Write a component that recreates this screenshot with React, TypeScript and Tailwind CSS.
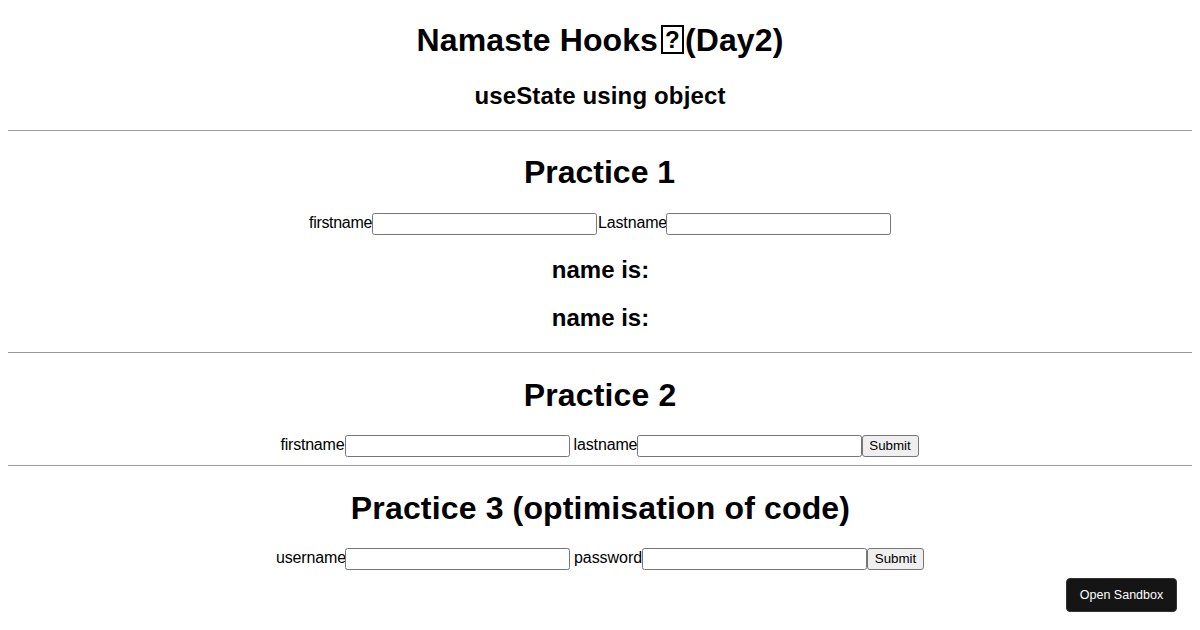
import React from "react";

function Field({ label, labelClass }: { label: string; labelClass: string }) {
  return (
    <>
      <label className={labelClass}>{label}</label>
      <input className="box-border inline-block w-[225px] h-[22px] border border-[#767676] rounded-[2.5px] bg-white align-baseline" />
    </>
  );
}

function Submit() {
  return (
    <button className="box-border inline-block w-[57px] h-[22px] border border-[#767676] rounded-[3px] bg-[#efefef] text-[13.33px] leading-none text-black align-[1px]">
      Submit
    </button>
  );
}

export default function App() {
  return (
    <div className="relative h-[630px] overflow-hidden bg-white px-2 text-center text-black font-['Liberation_Sans',Arial,sans-serif] text-[16px] leading-[18px]">
      <h1 className="pt-[22px] text-[32px] leading-[37px] font-bold tracking-[0.1px]">
        Namaste Hooks
        <span className="relative inline-block w-[27px] h-0">
          <span className="absolute left-[3px] top-[-26px] flex box-border w-[23px] h-[29px] items-center justify-center border-2 border-black text-[24px] leading-none">
            ?
          </span>
        </span>
        (Day2)
      </h1>
      <h2 className="mt-[23px] mb-[21px] text-[24px] leading-[27px] font-bold tracking-[0.15px]">useState using object</h2>
      <hr className="border-t border-[#9a9a9a]" />
      <h1 className="mt-[23px] pr-[1px] text-[32px] leading-[37px] font-bold">Practice 1</h1>
      <div className="mt-[22px] h-[22px]">
        <Field label="firstname" labelClass="inline-block w-[63px] align-[1px] text-left whitespace-nowrap tracking-[-0.31px]" />
        <Field label="Lastname" labelClass="inline-block w-[69px] pl-[1px] align-[1px] text-left whitespace-nowrap tracking-[-0.15px]" />
      </div>
      <h2 className="mt-[21px] pl-[1px] text-[24px] leading-[27px] font-bold">name is:</h2>
      <h2 className="mt-[21px] pl-[1px] text-[24px] leading-[27px] font-bold">name is:</h2>
      <hr className="mt-[21px] border-t border-[#9a9a9a]" />
      <h1 className="mt-[24px] text-[32px] leading-[37px] font-bold tracking-[0.15px]">Practice 2</h1>
      <div className="mt-[21px] h-[22px]">
        <Field label="firstname" labelClass="inline-block w-[64px] -ml-[1px] align-[1px] text-left whitespace-nowrap tracking-[-0.22px]" />
        <Field label="lastname" labelClass="inline-block w-[63px] ml-[4px] align-[1px] text-left whitespace-nowrap tracking-[-0.13px]" />
        <Submit />
      </div>
      <hr className="mt-[8px] border-t border-[#9a9a9a]" />
      <h1 className="mt-[24px] pl-[1px] text-[32px] leading-[37px] font-bold tracking-[0.15px]">Practice 3 (optimisation of code)</h1>
      <div className="mt-[21px] h-[22px]">
        <Field label="username" labelClass="inline-block w-[69px] align-[1px] text-left whitespace-nowrap tracking-[-0.16px]" />
        <Field label="password" labelClass="inline-block w-[68px] ml-[4px] align-[1px] text-left whitespace-nowrap tracking-[-0.06px]" />
        <Submit />
      </div>
      <button className="absolute left-[1066px] top-[578px] w-[111px] h-[34px] rounded-[4px] border border-[#333333] bg-[#151515] text-[12.5px] text-white">
        Open Sandbox
      </button>
    </div>
  );
}
